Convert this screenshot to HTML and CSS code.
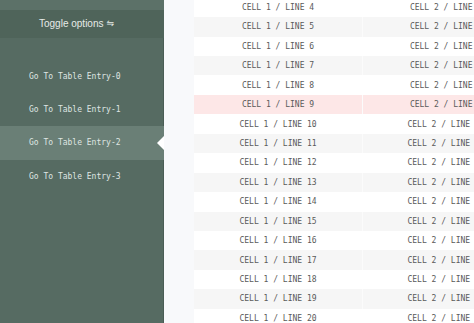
FILE: index.html
```html
<!DOCTYPE html>
<html>
<head>
<meta charset="utf-8">
<link rel="stylesheet" href="styles.css">
</head>
<body>
<aside class="sidebar">
  <div class="sidebar-top"></div>
  <div class="toggle">Toggle options <span class="toggle-icon">⇋</span></div>
  <nav class="menu">
    <a class="menu-item">Go To Table Entry-0</a>
    <a class="menu-item">Go To Table Entry-1</a>
    <a class="menu-item active">Go To Table Entry-2</a>
    <a class="menu-item">Go To Table Entry-3</a>
  </nav>
</aside>
<main class="content">
  <table class="grid">
    <tbody>
      <tr class="even"><td>CELL 1 / LINE 4</td><td>CELL 2 / LINE 4</td></tr>
      <tr class="odd"><td>CELL 1 / LINE 5</td><td>CELL 2 / LINE 5</td></tr>
      <tr class="even"><td>CELL 1 / LINE 6</td><td>CELL 2 / LINE 6</td></tr>
      <tr class="odd"><td>CELL 1 / LINE 7</td><td>CELL 2 / LINE 7</td></tr>
      <tr class="even"><td>CELL 1 / LINE 8</td><td>CELL 2 / LINE 8</td></tr>
      <tr class="odd highlight"><td>CELL 1 / LINE 9</td><td>CELL 2 / LINE 9</td></tr>
      <tr class="even"><td>CELL 1 / LINE 10</td><td>CELL 2 / LINE 10</td></tr>
      <tr class="odd"><td>CELL 1 / LINE 11</td><td>CELL 2 / LINE 11</td></tr>
      <tr class="even"><td>CELL 1 / LINE 12</td><td>CELL 2 / LINE 12</td></tr>
      <tr class="odd"><td>CELL 1 / LINE 13</td><td>CELL 2 / LINE 13</td></tr>
      <tr class="even"><td>CELL 1 / LINE 14</td><td>CELL 2 / LINE 14</td></tr>
      <tr class="odd"><td>CELL 1 / LINE 15</td><td>CELL 2 / LINE 15</td></tr>
      <tr class="even"><td>CELL 1 / LINE 16</td><td>CELL 2 / LINE 16</td></tr>
      <tr class="odd"><td>CELL 1 / LINE 17</td><td>CELL 2 / LINE 17</td></tr>
      <tr class="even"><td>CELL 1 / LINE 18</td><td>CELL 2 / LINE 18</td></tr>
      <tr class="odd"><td>CELL 1 / LINE 19</td><td>CELL 2 / LINE 19</td></tr>
      <tr class="even"><td>CELL 1 / LINE 20</td><td>CELL 2 / LINE 20</td></tr>
    </tbody>
  </table>
</main>
</body>
</html>
```
FILE: styles.css
```css
html, body {
  margin: 0;
  padding: 0;
  height: 100%;
}
body {
  display: flex;
  height: 323px;
  overflow: hidden;
  background: #f8f9fb;
}
.sidebar {
  flex: 0 0 164px;
  width: 164px;
  background: #566b62;
  box-shadow: inset -1px 0 0 #4a5d55;
  display: flex;
  flex-direction: column;
}
.sidebar-top {
  height: 10px;
  background: #5c7168;
}
.toggle {
  height: 28px;
  background: #4f645a;
  color: #e6ebe8;
  font-family: "Liberation Sans", Arial, sans-serif;
  font-size: 10px;
  display: flex;
  align-items: center;
  justify-content: flex-start;
  padding-left: 39px;
  padding-bottom: 2px;
  box-sizing: border-box;
}
.toggle-icon {
  margin-left: 3px;
  font-family: "DejaVu Sans", sans-serif;
  font-size: 9px;
}
.menu {
  margin-top: 21.5px;
  display: flex;
  flex-direction: column;
}
.menu-item {
  position: relative;
  height: 33.4px;
  display: flex;
  align-items: center;
  padding-left: 29px;
  color: #dfe6e2;
  font-family: "DejaVu Sans Mono", monospace;
  font-size: 8px;
}
.menu-item.active {
  background: #6a7f76;
}
.menu-item.active::after {
  content: "";
  position: absolute;
  right: 0;
  top: 50%;
  margin-top: -7px;
  border-top: 7px solid transparent;
  border-bottom: 7px solid transparent;
  border-right: 7px solid #ffffff;
}
.content {
  flex: 1;
  padding-left: 30px;
  overflow: hidden;
}
.grid {
  border-collapse: collapse;
  margin-top: -2.3px;
  table-layout: fixed;
  width: 336px;
}
.grid td {
  width: 168px;
  height: 19.45px;
  padding: 0;
  text-align: center;
  font-family: "DejaVu Sans Mono", monospace;
  font-size: 8px;
  color: #5a5a5a;
  white-space: nowrap;
}
.grid tr.even {
  background: #ffffff;
}
.grid tr.odd {
  background: #f6f6f6;
}
.grid tr.odd td + td {
  box-shadow: inset 1px 0 0 #fbfbfb;
}
.grid tr.highlight {
  background: #fde7e7;
}
```
